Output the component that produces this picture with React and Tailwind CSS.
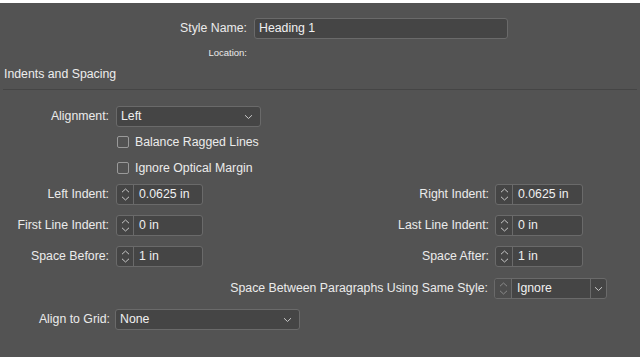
import React from "react";

const font = { fontFamily: '"Liberation Sans", Arial, sans-serif' };

function Chevron() {
  return (
    <svg width="9" height="6" viewBox="0 0 9 6" className="text-[#c8c8c8]">
      <path d="M1 1.2 L4.5 4.5 L8 1.2" fill="none" stroke="currentColor" strokeWidth="1" />
    </svg>
  );
}

function Stepper({ dim }) {
  return (
    <div className={`w-[17px] h-full flex flex-col items-center justify-center gap-[3px] border-r border-[#6a6a6a] ${dim ? "text-[#8a8a8a]" : "text-[#c8c8c8]"}`}>
      <svg width="9" height="5" viewBox="0 0 9 5"><path d="M1 4.2 L4.5 1 L8 4.2" fill="none" stroke="currentColor" strokeWidth="1" /></svg>
      <svg width="9" height="5" viewBox="0 0 9 5"><path d="M1 0.8 L4.5 4 L8 0.8" fill="none" stroke="currentColor" strokeWidth="1" /></svg>
    </div>
  );
}

function Spinner({ value, w }) {
  return (
    <div className={`${w} h-[21px] flex items-center rounded-[3px] border border-[#6a6a6a] bg-[#454545]`}>
      <Stepper />
      <span className="pl-[5px] text-[12.3px] text-[#f0f0f0]">{value}</span>
    </div>
  );
}

function Select({ value, w }) {
  return (
    <div className={`${w} h-[21px] flex items-center justify-between rounded-[3px] border border-[#6a6a6a] bg-[#454545] pl-[4px] pr-[7px]`}>
      <span className="text-[12.3px] text-[#f0f0f0]">{value}</span>
      <Chevron />
    </div>
  );
}

function Check({ label }) {
  return (
    <div className="flex items-center h-[26px] pl-[117px]">
      <div className="w-[12px] h-[12px] rounded-[2px] border border-[#9a9a9a]" />
      <span className="ml-[6px] text-[12.3px] text-[#ebebeb]">{label}</span>
    </div>
  );
}

function Label({ children, w }) {
  return <div className={`${w} text-right text-[12.3px] text-[#ebebeb] whitespace-nowrap`}>{children}</div>;
}

function PairRow({ l, lv, r, rv }) {
  return (
    <div className="flex items-center h-[31px]">
      <Label w="w-[109px]">{l}</Label>
      <div className="ml-[7px]"><Spinner value={lv} w="w-[87px]" /></div>
      <Label w="w-[286px]">{r}</Label>
      <div className="ml-[6px]"><Spinner value={rv} w="w-[88px]" /></div>
    </div>
  );
}

export default function App() {
  return (
    <div className="w-[640px] h-[357px] bg-[#535353] overflow-hidden" style={font}>
      <div className="h-[3px] bg-white" />
      <div className="flex items-center h-[21px] mt-[15px]">
        <Label w="w-[247px]">Style Name:</Label>
        <div className="ml-[7px] w-[254px] h-[21px] flex items-center rounded-[3px] border border-[#6a6a6a] bg-[#454545] pl-[4px]">
          <span className="text-[12.3px] text-[#f0f0f0]">Heading 1</span>
        </div>
      </div>
      <div className="flex h-[14px] mt-[7px] items-center">
        <div className="w-[247px] text-right text-[9.5px] text-[#ebebeb]">Location:</div>
      </div>
      <div className="mt-[7px] pl-[4px] h-[14px] flex items-center text-[12.3px] text-[#ededed]">Indents and Spacing</div>
      <div className="mt-[8px] mx-[3px] h-px bg-[#454545]" />
      <div className="mt-[16px] flex items-center h-[21px]">
        <Label w="w-[109px]">Alignment:</Label>
        <div className="ml-[7px]"><Select value="Left" w="w-[145px]" /></div>
      </div>
      <div className="mt-[2px]">
        <Check label="Balance Ragged Lines" />
        <Check label="Ignore Optical Margin" />
      </div>
      <div className="-mt-[2px]">
        <PairRow l="Left Indent:" lv="0.0625 in" r="Right Indent:" rv="0.0625 in" />
        <PairRow l="First Line Indent:" lv="0 in" r="Last Line Indent:" rv="0 in" />
        <PairRow l="Space Before:" lv="1 in" r="Space After:" rv="1 in" />
      </div>
      <div className="mt-[1px] flex items-center h-[31px]">
        <Label w="w-[488px]">Space Between Paragraphs Using Same Style:</Label>
        <div className="ml-[6px] w-[113px] h-[21px] flex items-center rounded-[3px] border border-[#6a6a6a] bg-[#454545]">
          <div className="h-full bg-[#4d4d4d] rounded-l-[3px]"><Stepper dim /></div>
          <span className="pl-[5px] flex-1 text-[12.3px] text-[#f0f0f0]">Ignore</span>
          <div className="w-[16px] h-full flex items-center justify-center border-l border-[#6a6a6a]"><Chevron /></div>
        </div>
      </div>
      <div className="flex items-center h-[31px]">
        <Label w="w-[110px]">Align to Grid:</Label>
        <div className="ml-[5px]"><Select value="None" w="w-[185px]" /></div>
      </div>
    </div>
  );
}
